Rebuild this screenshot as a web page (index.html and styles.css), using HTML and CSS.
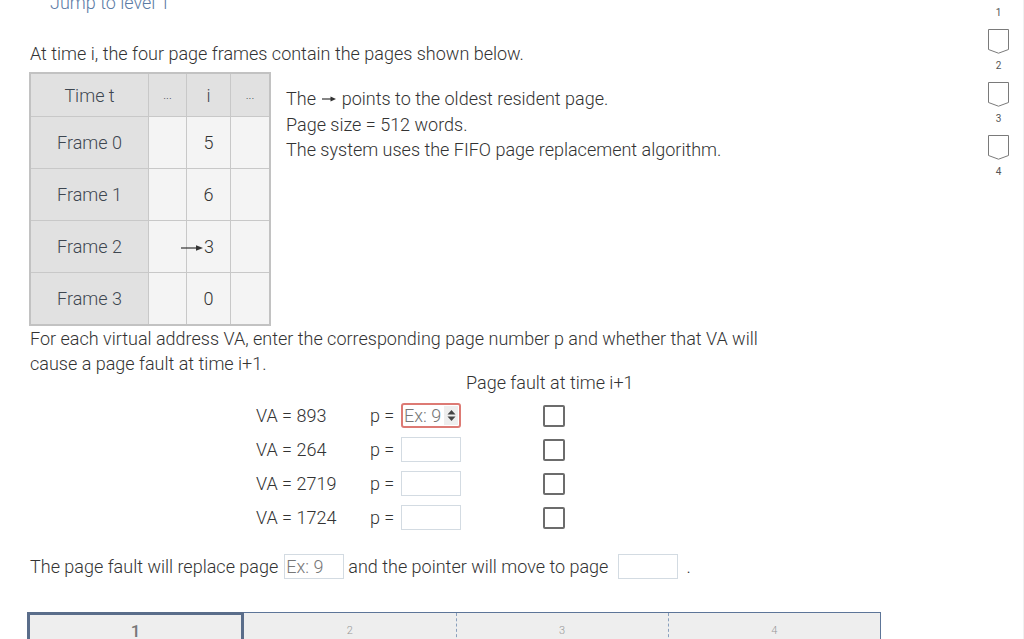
FILE: index.html
```html
<!DOCTYPE html>
<html>
<head>
<meta charset="utf-8">
<link rel="stylesheet" href="styles.css">
</head>
<body>
<div class="page">
  <div class="main">
    <a class="jump" href="#">Jump to level 1</a>
    <p class="intro">At time i, the four page frames contain the pages shown below.</p>
    <div class="frames">
      <table class="ftable">
        <tr class="head">
          <th class="c1">Time t</th><th class="c2 dots">...</th><th class="c3">i</th><th class="c4 dots">...</th>
        </tr>
        <tr><th>Frame 0</th><td></td><td>5</td><td></td></tr>
        <tr><th>Frame 1</th><td></td><td>6</td><td></td></tr>
        <tr><th>Frame 2</th><td></td><td class="arrowcell"><svg class="arr" width="23" height="8" viewBox="0 0 23 8"><line x1="0" y1="4" x2="17" y2="4" stroke="#333" stroke-width="1.2"/><path d="M15 1.2 L22 4 L15 6.8 Z" fill="#333"/></svg>3</td><td></td></tr>
        <tr><th>Frame 3</th><td></td><td>0</td><td></td></tr>
      </table>
      <div class="notes">
        <div>The <svg class="arr small" width="15" height="8" viewBox="0 0 15 8"><line x1="0" y1="4" x2="10" y2="4" stroke="#333" stroke-width="1.2"/><path d="M8.5 1.5 L14 4 L8.5 6.5 Z" fill="#333"/></svg> points to the oldest resident page.</div>
        <div>Page size = 512 words.</div>
        <div>The system uses the FIFO page replacement algorithm.</div>
      </div>
    </div>
    <p class="instr">For each virtual address VA, enter the corresponding page number p and whether that VA will cause a page fault at time i+1.</p>
    <div class="vagrid">
      <span></span><span></span><span></span><span class="fhead">Page fault at time i+1</span>
      <span class="va">VA = 893</span><span class="peq">p =</span>
      <span class="box focus"><span class="ph">Ex: 9</span><span class="spin"><svg width="9" height="13" viewBox="0 0 9 13"><path d="M4.5 1 L8.5 5.5 L0.5 5.5 Z" fill="#444"/><path d="M4.5 12 L8.5 7.5 L0.5 7.5 Z" fill="#444"/></svg></span></span>
      <span class="cbw"><span class="cb"></span></span>
      <span class="va">VA = 264</span><span class="peq">p =</span><span class="box"></span><span class="cbw"><span class="cb"></span></span>
      <span class="va">VA = 2719</span><span class="peq">p =</span><span class="box"></span><span class="cbw"><span class="cb"></span></span>
      <span class="va">VA = 1724</span><span class="peq">p =</span><span class="box"></span><span class="cbw"><span class="cb"></span></span>
    </div>
    <div class="replace">
      <span>The page fault will replace page</span>
      <span class="box inl first"><span class="ph">Ex: 9</span></span>
      <span>and the pointer will move to page</span>
      <span class="box inl second"></span>
      <span>.</span>
    </div>
    <div class="levels">
      <div class="lvl active">1</div>
      <div class="lvl">2</div>
      <div class="lvl">3</div>
      <div class="lvl">4</div>
    </div>
  </div>
  <div class="side">
    <div class="snum">1</div>
    <div class="shield"><svg width="21" height="25" viewBox="0 0 21 25"><path d="M0.5 0.5 H20.5 V20.5 L10.5 24.2 L0.5 20.5 Z" fill="#fff" stroke="#7a7a7a" stroke-width="1"/></svg></div>
    <div class="snum">2</div>
    <div class="shield"><svg width="21" height="25" viewBox="0 0 21 25"><path d="M0.5 0.5 H20.5 V20.5 L10.5 24.2 L0.5 20.5 Z" fill="#fff" stroke="#7a7a7a" stroke-width="1"/></svg></div>
    <div class="snum">3</div>
    <div class="shield"><svg width="21" height="25" viewBox="0 0 21 25"><path d="M0.5 0.5 H20.5 V20.5 L10.5 24.2 L0.5 20.5 Z" fill="#fff" stroke="#7a7a7a" stroke-width="1"/></svg></div>
    <div class="snum">4</div>
  </div>
</div>
</body>
</html>
```
FILE: styles.css
```css
html, body {
  margin: 0;
  padding: 0;
  background: #fff;
}
body {
  font-family: Roboto, "Liberation Sans", sans-serif;
  font-size: 18px;
  font-weight: 300;
  color: #333;
  overflow: hidden;
  height: 639px;
}
.page {
  display: flex;
  align-items: flex-start;
}
.main {
  flex: 1;
  padding-left: 30px;
  margin-top: -7px;
}
.jump {
  display: block;
  margin-left: 20px;
  color: #5b7ba5;
  text-decoration: none;
  line-height: 20px;
}
.intro {
  margin: 28px 0 0;
  line-height: 25px;
}
.frames {
  display: flex;
  align-items: flex-start;
  margin-top: 6px;
  margin-left: -1px;
}
.ftable {
  border-collapse: collapse;
  border: 2px solid #c2c2c2;
}
.ftable th, .ftable td {
  border: 1px solid #c8c8c8;
  text-align: center;
  font-weight: 300;
  padding: 0;
  height: 51px;
}
.ftable th {
  background: #e1e1e1;
  color: #3d4650;
}
.ftable td {
  background: #f4f4f4;
}
.ftable .head th {
  height: 42px;
}
.c1 { width: 117px; }
.c2 { width: 37px; }
.c3 { width: 43px; }
.c4 { width: 38px; }
.dots {
  font-size: 12px;
  color: #666;
}
.arrowcell {
  white-space: nowrap;
}
.arr {
  vertical-align: middle;
  margin-left: -22px;
}
.arr.small {
  margin-left: 2px;
  margin-right: 0;
  vertical-align: 2px;
}
.notes {
  margin-left: 15px;
  padding-top: 14px;
  line-height: 25.5px;
}
.instr {
  margin: 0;
  width: 745px;
  line-height: 25px;
}
.vagrid {
  display: grid;
  grid-template-columns: 114px 31px 60px 152px;
  grid-template-rows: 22.5px repeat(4, 34px);
  align-items: center;
  margin-left: 226px;
}
.vagrid > span:nth-child(-n+4) {
  align-self: start;
  line-height: 13px;
}
.fhead {
  white-space: nowrap;
  margin-left: 5px;
}
.va, .peq {
  white-space: nowrap;
}
.box {
  display: inline-flex;
  align-items: center;
  box-sizing: border-box;
  width: 60px;
  height: 25px;
  border: 1px solid #d3dbe2;
  background: #fff;
}
.box.focus {
  border: 2px solid #dd7a74;
  border-radius: 3px;
  justify-content: space-between;
}
.ph {
  color: #777;
  padding-left: 1px;
}
.spin {
  display: flex;
  align-items: center;
  justify-content: center;
  background: #eee;
  width: 14px;
  height: 19px;
  margin-right: 1px;
}
.cbw {
  padding-left: 82px;
  display: flex;
}
.cb {
  display: block;
  box-sizing: border-box;
  width: 22px;
  height: 22px;
  border: 2px solid #6c6c6c;
  border-radius: 2px;
}
.replace {
  display: flex;
  align-items: center;
  white-space: nowrap;
  margin: 19px 0 0;
  height: 26px;
}
.box.inl.first {
  margin: 0 4px 0 6px;
}
.box.inl.second {
  margin: 0 8px 0 10px;
}
.levels {
  display: flex;
  width: 853px;
  margin-top: 32px;
  margin-left: -3px;
  border-top: 1px solid #5d7598;
  border-right: 1px solid #5d7598;
  background: #eee;
  height: 40px;
}
.lvl {
  flex: 1;
  text-align: center;
  font-size: 11px;
  color: #999;
  padding-top: 11px;
  border-left: 1px dashed #8aa0bd;
}
.lvl:nth-child(2) { border-left: none; }
.lvl.active {
  border: 3px solid #5a6d8a;
  border-bottom: none;
  margin-top: -1px;
  font-size: 17px;
  font-weight: 500;
  color: #777;
  padding-top: 6px;
}
.side {
  width: 44px;
  height: 639px;
  box-sizing: border-box;
  border-right: 1px solid #f0f0f0;
  display: flex;
  flex-direction: column;
  align-items: center;
  padding-top: 6px;
  padding-right: 6px;
}
.snum {
  font-size: 10px;
  font-weight: 400;
  color: #555;
  line-height: 14px;
}
.shield {
  margin: 9px 0 5px;
}
.shield svg { display: block; }
```
